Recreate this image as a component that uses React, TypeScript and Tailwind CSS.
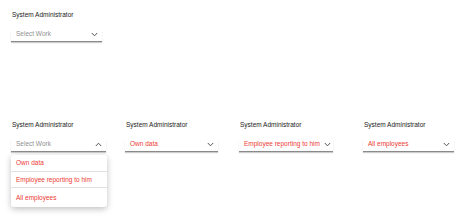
import React from "react";

const Chevron = ({ up = false }: { up?: boolean }) => (
  <svg width="7" height="5" viewBox="0 0 7 5" className="shrink-0">
    <polyline
      points={up ? "0.8,4 3.5,1.2 6.2,4" : "0.8,1 3.5,3.8 6.2,1"}
      fill="none"
      stroke="#555"
      strokeWidth="1"
    />
  </svg>
);

type FieldProps = {
  width: string;
  value: string;
  placeholder?: boolean;
  up?: boolean;
  tight?: boolean;
  children?: React.ReactNode;
};

const Field = ({ width, value, placeholder, up, tight, children }: FieldProps) => (
  <div className={`relative flex flex-col ${width}`}>
    <div className="h-[8px] whitespace-nowrap pl-[1px] text-[6.5px] leading-[8px] text-[#222]">
      System Administrator
    </div>
    <div
      className={`mt-[11px] flex items-center border-b border-[#8a8a8a] pb-[3px] pl-[5px] pr-[4px] shadow-[0_1px_1px_rgba(0,0,0,0.2)] ${
        tight ? "justify-start gap-[4px]" : "justify-between"
      }`}
    >
      <span
        className={`whitespace-nowrap text-[6.5px] leading-[8px] ${
          placeholder ? "text-[#8f8f8f]" : "text-[#ee3a33]"
        }`}
      >
        {value}
      </span>
      <Chevron up={up} />
    </div>
    {children}
  </div>
);

export default function App() {
  return (
    <div
      className="h-[217px] w-[474px] bg-white"
      style={{ fontFamily: '"Liberation Sans", Arial, sans-serif' }}
    >
      <div className="pl-[11px] pt-[11px]">
        <Field width="w-[91px]" value="Select Work" placeholder />
      </div>
      <div className="flex pl-[11px] pt-[79px]">
        <Field width="w-[95px]" value="Select Work" placeholder up>
          <div className="absolute left-0 top-[34px] z-10 w-[96px] rounded-[3px] bg-white shadow-[0_2px_6px_rgba(0,0,0,0.25)]">
            <div className="flex h-[17px] items-center whitespace-nowrap border-b border-[#e2e2e2] pl-[5px] text-[6.5px] text-[#ee3a33]">
              Own data
            </div>
            <div className="flex h-[16px] items-center whitespace-nowrap border-b border-[#e2e2e2] pl-[5px] text-[6.5px] text-[#ee3a33]">
              Employee reporting to him
            </div>
            <div className="flex h-[19px] items-center whitespace-nowrap pl-[5px] text-[6.5px] text-[#ee3a33]">
              All employees
            </div>
          </div>
        </Field>
        <div className="ml-[19px]">
          <Field width="w-[93px]" value="Own data" />
        </div>
        <div className="ml-[21px]">
          <Field width="w-[94px]" value="Employee reporting to him" tight />
        </div>
        <div className="ml-[30px]">
          <Field width="w-[91px]" value="All employees" />
        </div>
      </div>
    </div>
  );
}
